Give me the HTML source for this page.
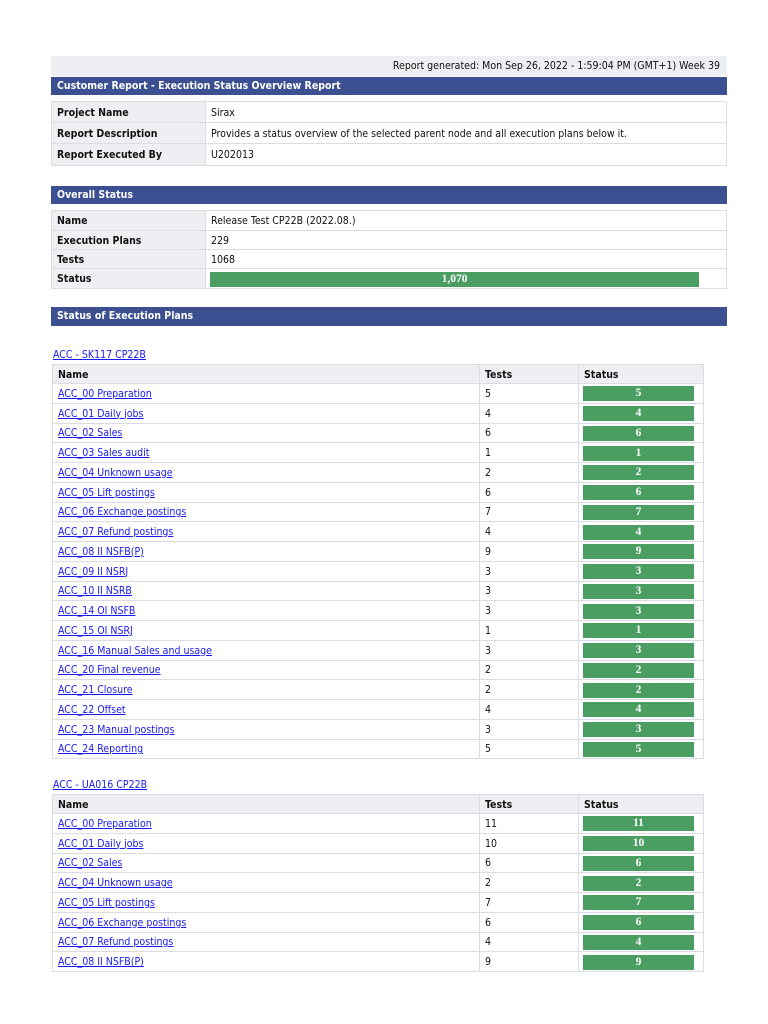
<!DOCTYPE html>
<html><head><meta charset="utf-8"><style>
body{margin:0;background:#fff;font-family:"DejaVu Sans Condensed","Liberation Sans",sans-serif;font-size:10.5px;color:#111;}
.a{position:absolute;}
.bar{background:#3c5091;color:#fff;font-weight:bold;padding-left:6px;box-sizing:border-box;}
table{position:absolute;border-collapse:collapse;table-layout:fixed;}
td{border:1px solid #dcdde2;padding:1px 0 0 5px;box-sizing:border-box;white-space:nowrap;overflow:hidden;}
td.k{background:#eeeff3;font-weight:bold;}
tr.h td{background:#eeeff3;font-weight:bold;}
a{color:#1a1aee;text-decoration:underline;}
.g{background:#4a9e62;color:#fff;font-weight:bold;text-align:center;height:15px;line-height:15px;width:111px;margin-left:-1px;font-family:"Liberation Serif","DejaVu Serif",serif;font-size:11.5px;}
</style></head><body>
<div class="a" style="left:51px;top:56px;width:676px;height:20px;background:#eeeff3;text-align:right;line-height:20px;box-sizing:border-box;padding-right:7px;">Report generated: Mon Sep 26, 2022 - 1:59:04 PM (GMT+1) Week 39</div>
<div class="a bar" style="left:51px;top:77px;width:676px;height:18px;line-height:18px;">Customer Report - Execution Status Overview Report</div>
<table style="left:51px;top:101px;width:676px;">
<col style="width:154px"><col>
<tr style="height:21px"><td class="k">Project Name</td><td>Sirax</td></tr>
<tr style="height:21px"><td class="k">Report Description</td><td>Provides a status overview of the selected parent node and all execution plans below it.</td></tr>
<tr style="height:22px"><td class="k">Report Executed By</td><td>U202013</td></tr>
</table>
<div class="a bar" style="left:51px;top:186px;width:676px;height:18px;line-height:18px;">Overall Status</div>
<table style="left:51px;top:210px;width:676px;">
<col style="width:154px"><col>
<tr style="height:20px"><td class="k">Name</td><td>Release Test CP22B (2022.08.)</td></tr>
<tr style="height:19px"><td class="k">Execution Plans</td><td>229</td></tr>
<tr style="height:19px"><td class="k">Tests</td><td>1068</td></tr>
<tr style="height:20px"><td class="k">Status</td><td><div class="g" style="width:489px">1,070</div></td></tr>
</table>
<div class="a bar" style="left:51px;top:307px;width:676px;height:19px;line-height:19px;">Status of Execution Plans</div>

<div class="a" style="left:53px;top:349px;"><a>ACC - SK117 CP22B</a></div>
<table style="left:52px;top:364px;width:652px;">
<col style="width:427px"><col style="width:99px"><col>
<tr class="h" style="height:19px"><td>Name</td><td>Tests</td><td>Status</td></tr>
<tr style="height:19.75px"><td><a>ACC_00 Preparation</a></td><td>5</td><td><div class="g">5</div></td></tr>
<tr style="height:19.75px"><td><a>ACC_01 Daily jobs</a></td><td>4</td><td><div class="g">4</div></td></tr>
<tr style="height:19.75px"><td><a>ACC_02 Sales</a></td><td>6</td><td><div class="g">6</div></td></tr>
<tr style="height:19.75px"><td><a>ACC_03 Sales audit</a></td><td>1</td><td><div class="g">1</div></td></tr>
<tr style="height:19.75px"><td><a>ACC_04 Unknown usage</a></td><td>2</td><td><div class="g">2</div></td></tr>
<tr style="height:19.75px"><td><a>ACC_05 Lift postings</a></td><td>6</td><td><div class="g">6</div></td></tr>
<tr style="height:19.75px"><td><a>ACC_06 Exchange postings</a></td><td>7</td><td><div class="g">7</div></td></tr>
<tr style="height:19.75px"><td><a>ACC_07 Refund postings</a></td><td>4</td><td><div class="g">4</div></td></tr>
<tr style="height:19.75px"><td><a>ACC_08 II NSFB(P)</a></td><td>9</td><td><div class="g">9</div></td></tr>
<tr style="height:19.75px"><td><a>ACC_09 II NSRJ</a></td><td>3</td><td><div class="g">3</div></td></tr>
<tr style="height:19.75px"><td><a>ACC_10 II NSRB</a></td><td>3</td><td><div class="g">3</div></td></tr>
<tr style="height:19.75px"><td><a>ACC_14 OI NSFB</a></td><td>3</td><td><div class="g">3</div></td></tr>
<tr style="height:19.75px"><td><a>ACC_15 OI NSRJ</a></td><td>1</td><td><div class="g">1</div></td></tr>
<tr style="height:19.75px"><td><a>ACC_16 Manual Sales and usage</a></td><td>3</td><td><div class="g">3</div></td></tr>
<tr style="height:19.75px"><td><a>ACC_20 Final revenue</a></td><td>2</td><td><div class="g">2</div></td></tr>
<tr style="height:19.75px"><td><a>ACC_21 Closure</a></td><td>2</td><td><div class="g">2</div></td></tr>
<tr style="height:19.75px"><td><a>ACC_22 Offset</a></td><td>4</td><td><div class="g">4</div></td></tr>
<tr style="height:19.75px"><td><a>ACC_23 Manual postings</a></td><td>3</td><td><div class="g">3</div></td></tr>
<tr style="height:19.75px"><td><a>ACC_24 Reporting</a></td><td>5</td><td><div class="g">5</div></td></tr>
</table>

<div class="a" style="left:53px;top:779px;"><a>ACC - UA016 CP22B</a></div>
<table style="left:52px;top:794px;width:652px;">
<col style="width:427px"><col style="width:99px"><col>
<tr class="h" style="height:19px"><td>Name</td><td>Tests</td><td>Status</td></tr>
<tr style="height:19.75px"><td><a>ACC_00 Preparation</a></td><td>11</td><td><div class="g">11</div></td></tr>
<tr style="height:19.75px"><td><a>ACC_01 Daily jobs</a></td><td>10</td><td><div class="g">10</div></td></tr>
<tr style="height:19.75px"><td><a>ACC_02 Sales</a></td><td>6</td><td><div class="g">6</div></td></tr>
<tr style="height:19.75px"><td><a>ACC_04 Unknown usage</a></td><td>2</td><td><div class="g">2</div></td></tr>
<tr style="height:19.75px"><td><a>ACC_05 Lift postings</a></td><td>7</td><td><div class="g">7</div></td></tr>
<tr style="height:19.75px"><td><a>ACC_06 Exchange postings</a></td><td>6</td><td><div class="g">6</div></td></tr>
<tr style="height:19.75px"><td><a>ACC_07 Refund postings</a></td><td>4</td><td><div class="g">4</div></td></tr>
<tr style="height:19.75px"><td><a>ACC_08 II NSFB(P)</a></td><td>9</td><td><div class="g">9</div></td></tr>
</table>
</body></html>
